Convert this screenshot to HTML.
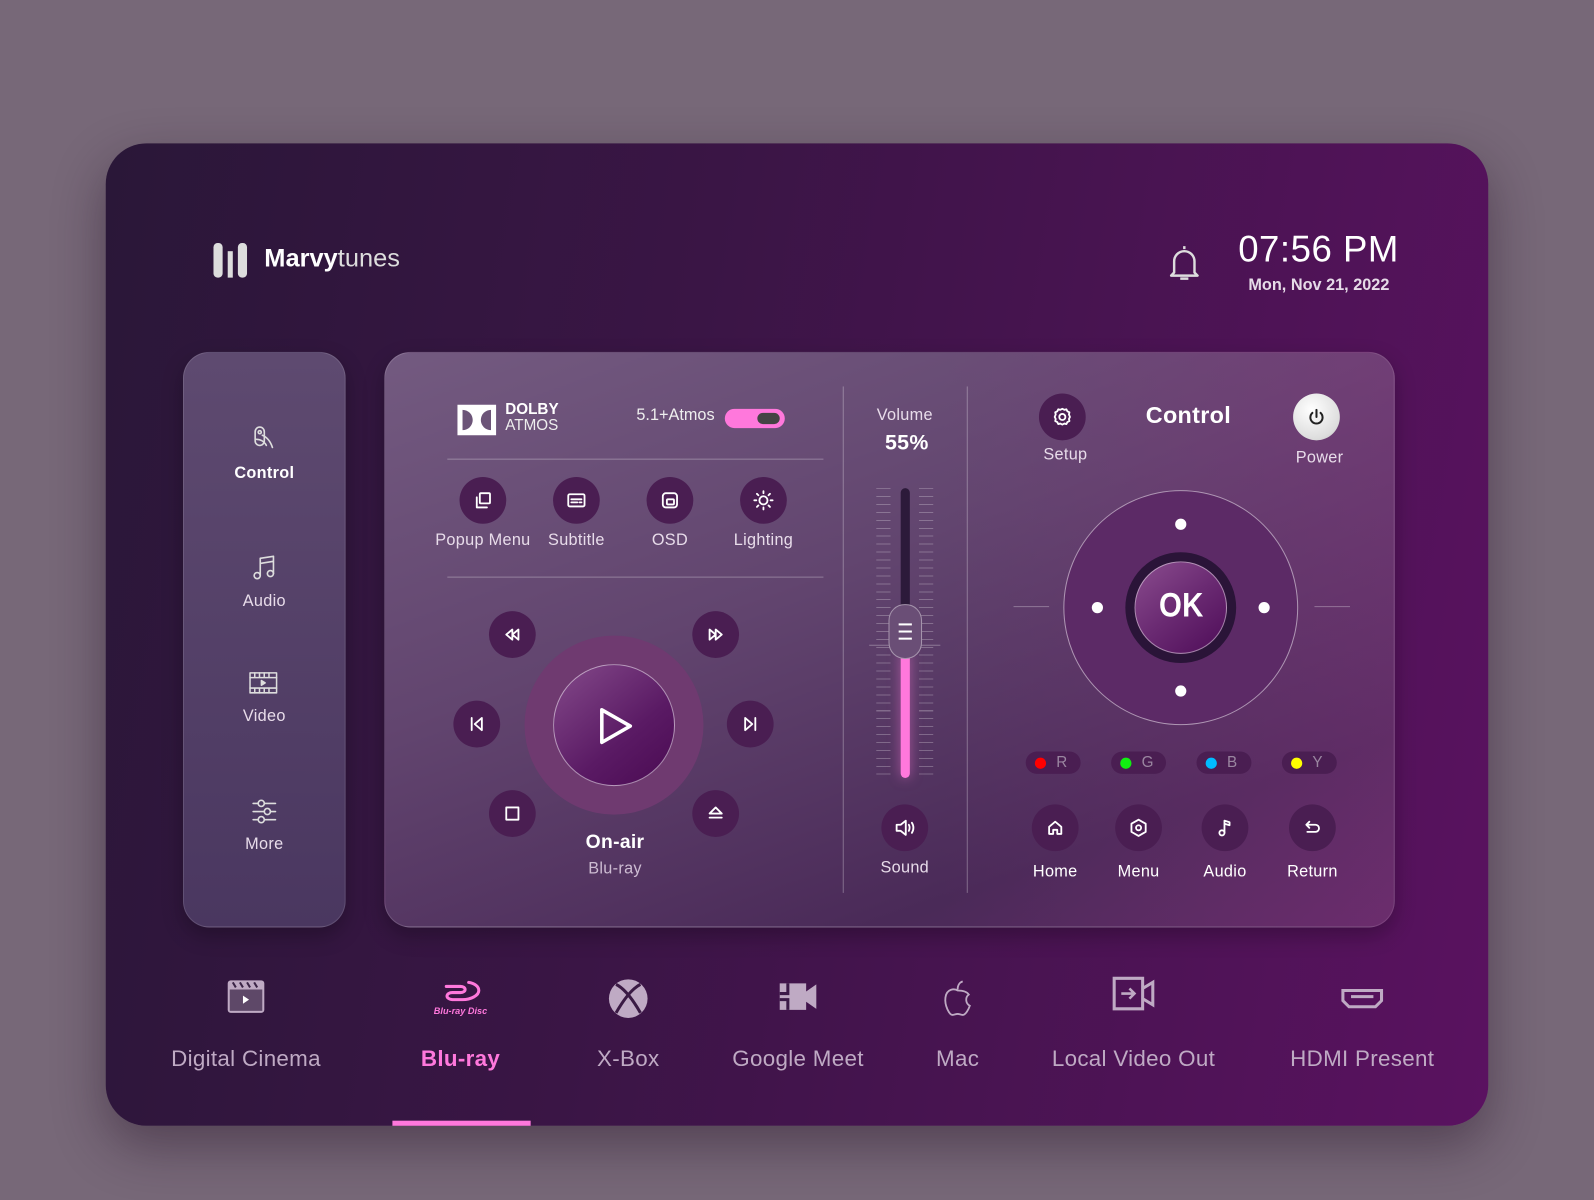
<!DOCTYPE html>
<html><head><meta charset="utf-8">
<style>
*{margin:0;padding:0;box-sizing:border-box}
html,body{width:1594px;height:1200px;overflow:hidden;background:#776878;font-family:"Liberation Sans","DejaVu Sans",sans-serif}
#w{position:absolute;left:0;top:0;width:1568px;height:1180px;transform:scale(1.01658,1.01695);transform-origin:0 0}
.a{position:absolute}
.card{left:104px;top:141px;width:1360px;height:966px;border-radius:40px;background:linear-gradient(100deg,#2a1738 0%,#3a1545 40%,#5a1260 100%);box-shadow:0 20px 50px rgba(40,20,40,.45);overflow:hidden}
.side{left:180px;top:346px;width:160px;height:566px;border-radius:26px;background:linear-gradient(180deg,#5e4a70 0%,#4a3760 100%);border:1px solid rgba(255,255,255,.12);box-shadow:0 8px 20px rgba(0,0,0,.25)}
.main{left:378px;top:346px;width:994px;height:566px;border-radius:26px;background:linear-gradient(160deg,#735a80 0%,#62456f 40%,#4a2a58 80%,#5a2a62 100%);border:1px solid rgba(255,255,255,.15);box-shadow:0 8px 20px rgba(0,0,0,.25)}
.main2{left:378px;top:346px;width:994px;height:566px;border-radius:26px;background:linear-gradient(90deg,rgba(0,0,0,0) 55%,rgba(140,50,130,.35) 100%)}
.cb{position:absolute;width:46px;height:46px;margin:-23px 0 0 -23px;border-radius:50%;background:#4a1e52;display:flex;align-items:center;justify-content:center}
.cb svg{width:22px;height:22px;fill:none;stroke:#fff;stroke-width:1.8;stroke-linecap:round;stroke-linejoin:round}
.lb{position:absolute;transform:translateX(-50%);white-space:nowrap;color:#e8dcea;font-size:16px;letter-spacing:.3px}
.hl{position:absolute;height:1px;background:rgba(255,255,255,.3)}
.vl{position:absolute;width:1px;background:rgba(255,255,255,.3)}
.dot{position:absolute;width:11px;height:11px;margin:-5.5px 0 0 -5.5px;border-radius:50%;background:#fff}
.pill{position:absolute;width:54px;height:22px;margin:-11px 0 0 -27px;border-radius:11px;background:#4a1e52;color:#9a86a0;font-size:15px}
.pill i{position:absolute;left:9px;top:6px;width:11px;height:11px;border-radius:50%}
.pill span{position:absolute;left:30px;top:2px}
.si svg{width:28px;height:28px;fill:none;stroke:#ddd;stroke-width:1.6;stroke-linecap:round;stroke-linejoin:round}
.nl{position:absolute;transform:translateX(-50%);white-space:nowrap;color:#bfaac4;font-size:22px;letter-spacing:.3px;top:1028px}
.ni{position:absolute;transform:translate(-50%,-50%)}
.tk{position:absolute;width:14px;height:286px;background:repeating-linear-gradient(180deg,rgba(255,255,255,.25) 0 1px,transparent 1px 7.8px)}
</style></head><body><div id="w">
<div class="a card"></div>
<div class="a" style="left:210px;top:239px;width:9px;height:34px;border-radius:4px;background:#ddd"></div>
<div class="a" style="left:224px;top:247px;width:5px;height:26px;background:#ddd"></div>
<div class="a" style="left:234px;top:239px;width:9px;height:34px;border-radius:4px;background:#ddd"></div>
<div class="a" style="left:260px;top:240px;font-size:25px;color:#fff"><b>Marvy</b><span style="color:#ddd">tunes</span></div>
<svg class="a" style="left:1147px;top:238px" width="36" height="40" viewBox="0 0 36 40" fill="none" stroke="#ddd" stroke-width="2.4" stroke-linejoin="round"><path d="M18 4v3M8 30V19a10 10 0 0 1 20 0v11l3 3H5z"/><path d="M14 36h8"/></svg>
<div class="a" style="left:1218px;top:224px;font-size:36px;color:#fff;letter-spacing:.5px">07:56 PM</div>
<div class="a" style="left:1228px;top:272px;font-size:16px;color:#e6dbe8;font-weight:bold">Mon, Nov 21, 2022</div>

<div class="a side"></div>
<div class="a main"></div>
<div class="a main2"></div>

<div class="a si" style="left:246px;top:418px"><svg viewBox="0 0 28 28"><rect x="5" y="2" width="9" height="18" rx="4.5"/><circle cx="9.5" cy="7" r="1.5"/><path d="M6 14c4 0 8 2 10 6M12 10c5 2 8 6 10 12"/></svg></div>
<div class="lb" style="left:260px;top:457px;color:#fff;font-weight:bold">Control</div>
<div class="a si" style="left:246px;top:544px"><svg viewBox="0 0 28 28"><circle cx="7" cy="22" r="3"/><circle cx="20" cy="20" r="3"/><path d="M10 22V5l13-2v17M10 10l13-2"/></svg></div>
<div class="lb" style="left:260px;top:583px">Audio</div>
<div class="a si" style="left:245px;top:657px"><svg viewBox="0 0 30 28"><rect x="1" y="4" width="28" height="21"/><path d="M1 9h28M1 20h28M6 4v5M11 4v5M16 4v5M21 4v5M6 20v5M11 20v5M16 20v5M21 20v5"/><path d="M13 12l4 2.5-4 2.5z" fill="#ddd"/></svg></div>
<div class="lb" style="left:260px;top:696px">Video</div>
<div class="a si" style="left:246px;top:784px"><svg viewBox="0 0 28 28"><path d="M3 6h22M3 14h22M3 22h22"/><circle cx="11" cy="6" r="3" fill="#4d3a64"/><circle cx="17" cy="14" r="3" fill="#4d3a64"/><circle cx="11" cy="22" r="3" fill="#4d3a64"/></svg></div>
<div class="lb" style="left:260px;top:822px">More</div>

<div class="a" style="left:450px;top:398px;width:38px;height:30px;background:#fff"></div>
<div class="a" style="left:455px;top:403px;width:10px;height:20px;background:#6c5478;border-radius:0 10px 10px 0"></div>
<div class="a" style="left:473px;top:403px;width:10px;height:20px;background:#6c5478;border-radius:10px 0 0 10px"></div>
<div class="a" style="left:497px;top:395px;font-size:15px;color:#fff;font-weight:bold;line-height:16px">DOLBY<br><span style="font-weight:normal;color:#eee">ATMOS</span></div>
<div class="a" style="left:626px;top:400px;font-size:16px;color:#eee">5.1+Atmos</div>
<div class="a" style="left:713px;top:402px;width:59px;height:19px;border-radius:10px;background:#ff78dc"></div>
<div class="a" style="left:745px;top:406px;width:22px;height:11px;border-radius:6px;background:#444"></div>
<div class="hl" style="left:440px;top:451px;width:370px"></div>
<div class="hl" style="left:440px;top:567px;width:370px"></div>

<div class="cb" style="left:475px;top:492px"><svg viewBox="0 0 22 22"><rect x="8" y="4" width="10" height="10" rx="1"/><path d="M5 8v10h10"/></svg></div>
<div class="cb" style="left:567px;top:492px"><svg viewBox="0 0 22 22"><rect x="3" y="5" width="16" height="12" rx="1.5"/><path d="M6 10h10M6 13h6M14 13h2"/></svg></div>
<div class="cb" style="left:659px;top:492px"><svg viewBox="0 0 22 22"><rect x="4" y="4" width="14" height="14" rx="3"/><rect x="8" y="10" width="7" height="5" rx="1"/></svg></div>
<div class="cb" style="left:751px;top:492px"><svg viewBox="0 0 22 22"><circle cx="11" cy="11" r="4"/><path d="M11 2v2M11 18v2M2 11h2M18 11h2M4.6 4.6l1.4 1.4M16 16l1.4 1.4M4.6 17.4L6 16M16 6l1.4-1.4"/></svg></div>
<div class="lb" style="left:475px;top:523px">Popup Menu</div>
<div class="lb" style="left:567px;top:523px">Subtitle</div>
<div class="lb" style="left:659px;top:523px">OSD</div>
<div class="lb" style="left:751px;top:523px">Lighting</div>

<div class="a" style="left:516px;top:625px;width:176px;height:176px;border-radius:50%;background:#6f3a70"></div>
<div class="a" style="left:544px;top:653px;width:120px;height:120px;border-radius:50%;background:linear-gradient(140deg,#844a8a,#5a1a64 60%,#4a0a52);border:1px solid rgba(255,255,255,.5)"></div>
<svg class="a" style="left:588px;top:695px" width="36" height="38" viewBox="0 0 36 38"><path d="M4 3l28 16L4 35z" fill="none" stroke="#fff" stroke-width="3.5" stroke-linejoin="round"/></svg>
<div class="cb" style="left:504px;top:624px"><svg viewBox="0 0 22 22"><path d="M11 6l-6 5 6 5zM17 6l-6 5 6 5z"/></svg></div>
<div class="cb" style="left:704px;top:624px"><svg viewBox="0 0 22 22"><path d="M5 6l6 5-6 5zM11 6l6 5-6 5z"/></svg></div>
<div class="cb" style="left:469px;top:712px"><svg viewBox="0 0 22 22"><path d="M6 5v12M16 5l-7 6 7 6z"/></svg></div>
<div class="cb" style="left:738px;top:712px"><svg viewBox="0 0 22 22"><path d="M16 5v12M6 5l7 6-7 6z"/></svg></div>
<div class="cb" style="left:504px;top:800px"><svg viewBox="0 0 22 22"><rect x="5" y="5" width="12" height="12"/></svg></div>
<div class="cb" style="left:704px;top:800px"><svg viewBox="0 0 22 22"><path d="M11 5l6 6H5zM5 15h12"/></svg></div>
<div class="lb" style="left:605px;top:818px;color:#fff;font-weight:bold;font-size:19px">On-air</div>
<div class="lb" style="left:605px;top:846px;color:#cdbcd2">Blu-ray</div>

<div class="vl" style="left:829px;top:380px;height:498px"></div>
<div class="vl" style="left:951px;top:380px;height:498px"></div>

<div class="lb" style="left:890px;top:400px">Volume</div>
<div class="lb" style="left:892px;top:424px;font-size:21px;font-weight:bold;color:#fff">55%</div>
<div class="tk" style="left:862px;top:480px"></div>
<div class="tk" style="left:904px;top:480px"></div>
<div class="a" style="left:886px;top:480px;width:9px;height:130px;border-radius:5px;background:#2c1a3a"></div>
<div class="a" style="left:886px;top:640px;width:9px;height:125px;border-radius:5px;background:#ff78dc;box-shadow:0 0 12px rgba(255,120,220,.5)"></div>
<div class="hl" style="left:855px;top:634px;width:70px"></div>
<div class="a" style="left:874px;top:594px;width:33px;height:54px;border-radius:16px;background:#6a4e76;border:1px solid rgba(255,255,255,.4)"></div>
<div class="a" style="left:884px;top:613px;width:13px;height:2px;background:#fff;box-shadow:0 7px 0 #fff,0 14px 0 #fff"></div>
<div class="cb" style="left:890px;top:814px"><svg viewBox="0 0 22 22"><path d="M3 8h4l5-4v14l-5-4H3zM15 8c1 1.5 1 4.5 0 6M18 6c2 3 2 7 0 10"/></svg></div>
<div class="lb" style="left:890px;top:845px">Sound</div>

<div class="cb" style="left:1045px;top:410px"><svg viewBox="0 0 22 22"><circle cx="11" cy="11" r="3"/><path d="M11 3l2 1 2-.5 1 2 2 1-.5 2 1 2.5-1 2 .5 2-2 1-1 2-2-.5-2 1-2-1-2 .5-1-2-2-1 .5-2-1-2 1-2.5-.5-2 2-1 1-2 2 .5z"/></svg></div>
<div class="lb" style="left:1048px;top:439px">Setup</div>
<div class="lb" style="left:1169px;top:395px;color:#fff;font-weight:bold;font-size:23px">Control</div>
<div class="cb" style="left:1295px;top:410px;background:radial-gradient(circle at 40% 35%,#fff,#ddd 70%,#bbb)"><svg viewBox="0 0 22 22" style="stroke:#222;stroke-width:2"><path d="M11 4v7M7 7a6 6 0 1 0 8 0"/></svg></div>
<div class="lb" style="left:1298px;top:442px">Power</div>

<div class="a" style="left:1046px;top:482px;width:231px;height:231px;border-radius:50%;background:#5c2a66;border:1px solid rgba(255,255,255,.5)"></div>
<div class="a" style="left:1107px;top:543px;width:109px;height:109px;border-radius:50%;background:#2a1438"></div>
<div class="a" style="left:1116px;top:552px;width:91px;height:91px;border-radius:50%;background:linear-gradient(140deg,#8a4c8e,#6a2a72 50%,#4e0c58);border:1px solid rgba(255,255,255,.45)"></div>
<div class="lb" style="left:1162px;top:576px;color:#fff;font-size:34px;font-weight:bold;transform:translateX(-50%) scaleX(.85)">OK</div>
<div class="dot" style="left:1161px;top:515px"></div>
<div class="dot" style="left:1161px;top:679px"></div>
<div class="dot" style="left:1079px;top:597px"></div>
<div class="dot" style="left:1243px;top:597px"></div>
<div class="hl" style="left:997px;top:596px;width:35px"></div>
<div class="hl" style="left:1293px;top:596px;width:35px"></div>

<div class="pill" style="left:1036px;top:750px"><i style="background:#f00"></i><span>R</span></div>
<div class="pill" style="left:1120px;top:750px"><i style="background:#1e1"></i><span>G</span></div>
<div class="pill" style="left:1204px;top:750px"><i style="background:#0bf"></i><span>B</span></div>
<div class="pill" style="left:1288px;top:750px"><i style="background:#ff0"></i><span>Y</span></div>

<div class="cb" style="left:1038px;top:814px"><svg viewBox="0 0 22 22"><path d="M5 10l6-5 6 5v7H13v-4h-4v4H5z"/></svg></div>
<div class="cb" style="left:1120px;top:814px"><svg viewBox="0 0 22 22"><path d="M11 3l7 4v8l-7 4-7-4V7z"/><circle cx="11" cy="11" r="2.5"/></svg></div>
<div class="cb" style="left:1205px;top:814px"><svg viewBox="0 0 22 22"><circle cx="8" cy="16" r="2.5"/><path d="M10.5 16V4l5 1.5v3l-5-1.5"/></svg></div>
<div class="cb" style="left:1291px;top:814px"><svg viewBox="0 0 22 22"><path d="M8 5L5 8l3 3M5 8h9a3.5 3.5 0 0 1 0 7H6"/></svg></div>
<div class="lb" style="left:1038px;top:849px;color:#fff">Home</div>
<div class="lb" style="left:1120px;top:849px;color:#fff">Menu</div>
<div class="lb" style="left:1205px;top:849px;color:#fff">Audio</div>
<div class="lb" style="left:1291px;top:849px;color:#fff">Return</div>

<svg class="ni" style="left:242px;top:980px" width="38" height="34" viewBox="0 0 38 34"><rect x="1" y="1" width="36" height="32" rx="3" fill="#bfaac4"/><rect x="3" y="10" width="32" height="21" fill="#5e4868"/><path d="M6 3l3 5M13 3l3 5M20 3l3 5M27 3l3 5" stroke="#3a2446" stroke-width="2"/><path d="M16 16l6 4-6 4z" fill="#fff"/></svg>
<svg class="ni" style="left:453px;top:976px" width="56" height="24" viewBox="0 0 56 24"><path d="M14 6h14c6 0 6 6 0 6H20c-6 0-8 6 0 7h10c8 0 16-4 16-9 0-4-4-7-10-8" fill="none" stroke="#ff78dc" stroke-width="3" stroke-linecap="round"/></svg>
<div class="ni" style="left:453px;top:994px;color:#ff78dc;font-weight:bold;font-style:italic;font-size:9px;white-space:nowrap">Blu-ray Disc</div>
<svg class="ni" style="left:618px;top:982px" width="40" height="40" viewBox="0 0 40 40"><circle cx="20" cy="20" r="19" fill="#bfaac4"/><path d="M8 6c8 4 16 14 24 28M32 6C24 10 16 20 8 34" stroke="#3a1a44" stroke-width="3" fill="none"/></svg>
<svg class="ni" style="left:785px;top:980px" width="40" height="34" viewBox="0 0 40 34"><path d="M2 4h26v26H2zM28 12l10-7v24l-10-7z" fill="#bfaac4"/><path d="M10 4v10H2M10 30V20H2" stroke="#3c1a48" stroke-width="3" fill="none"/></svg>
<svg class="ni" style="left:942px;top:982px" width="32" height="38" viewBox="0 0 32 38"><path d="M16 11c-3-2-11-2-12 7-1 8 4 17 7 17 2 0 3-1 5-1s3 1 5 1c3 0 6-6 7-9-4-2-5-8-1-11-2-3-7-4-11-4zM16 10c0-4 2-7 5-8" fill="none" stroke="#bfaac4" stroke-width="1.8"/></svg>
<svg class="ni" style="left:1115px;top:977px" width="42" height="34" viewBox="0 0 42 34"><path d="M2 2h28v30H2zM30 12l10-6v22l-10-6" fill="none" stroke="#bfaac4" stroke-width="3"/><path d="M9 17h13M17 12l5 5-5 5" fill="none" stroke="#bfaac4" stroke-width="2.5"/></svg>
<svg class="ni" style="left:1340px;top:982px" width="42" height="20" viewBox="0 0 42 20"><path d="M2 2h38v10l-6 6H8l-6-6z" fill="none" stroke="#bfaac4" stroke-width="3"/><path d="M10 8h22" stroke="#bfaac4" stroke-width="3"/></svg>

<div class="nl" style="left:242px">Digital Cinema</div>
<div class="nl" style="left:453px;color:#ff78dc;font-weight:bold">Blu-ray</div>
<div class="nl" style="left:618px">X-Box</div>
<div class="nl" style="left:785px">Google Meet</div>
<div class="nl" style="left:942px">Mac</div>
<div class="nl" style="left:1115px">Local Video Out</div>
<div class="nl" style="left:1340px">HDMI Present</div>
<div class="a" style="left:386px;top:1102px;width:136px;height:5px;background:#ff78dc"></div>
</div></body></html>
